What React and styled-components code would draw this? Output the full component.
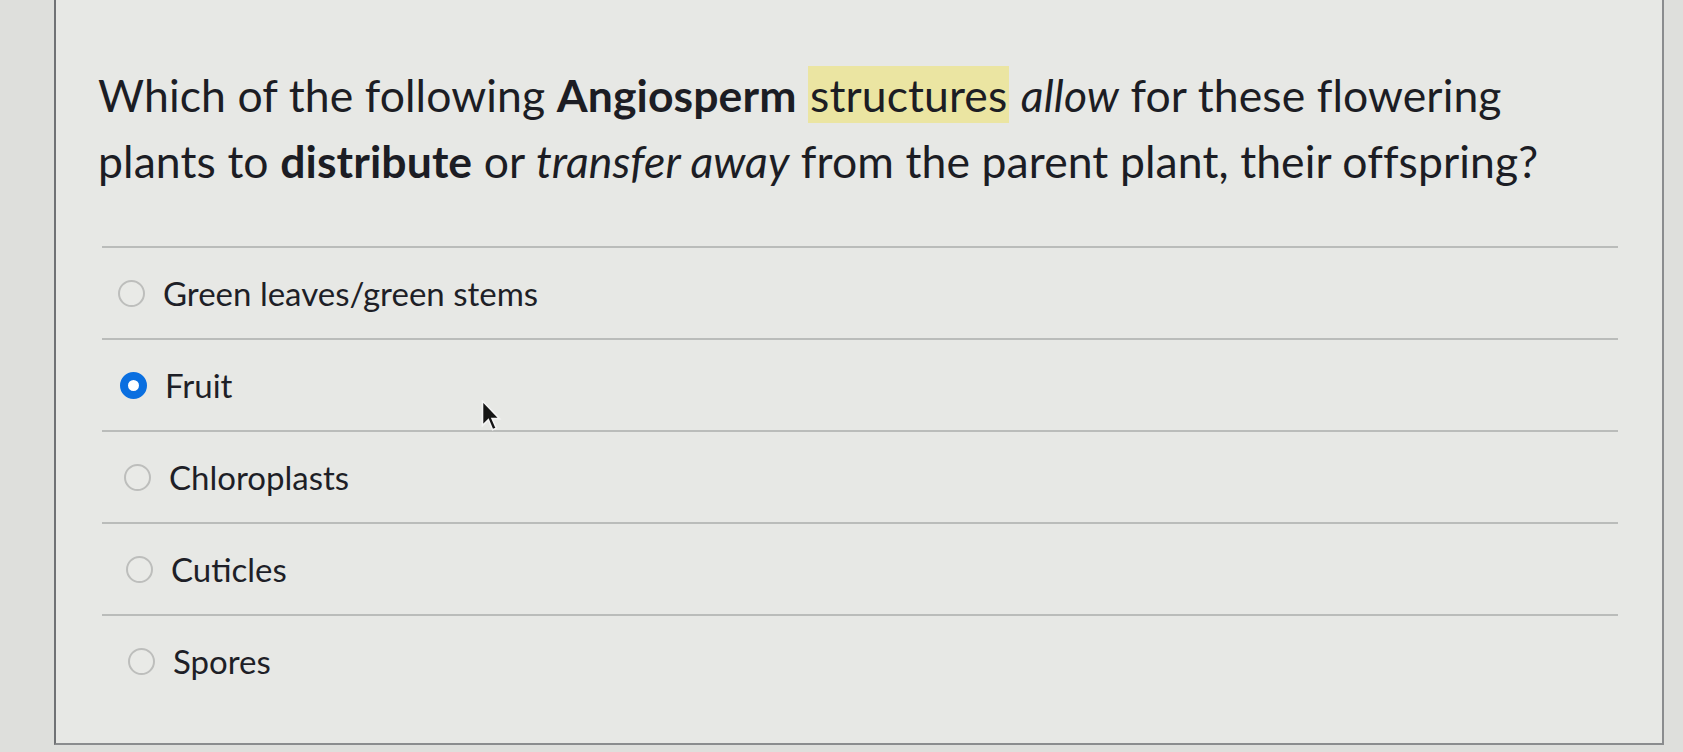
import React from 'react';
import styled, { createGlobalStyle } from 'styled-components';

const GlobalStyle = createGlobalStyle`
  html, body {
    margin: 0;
    padding: 0;
    background: #dedfdc;
  }
  body {
    font-family: Lato, "Noto Sans", sans-serif;
    color: #1f2027;
  }
`;

const Page = styled.div`
  width: 1683px;
  height: 752px;
  overflow: hidden;
  position: relative;
`;

const Card = styled.div`
  margin-left: 54px;
  width: 1610px;
  height: 745px;
  box-sizing: border-box;
  background: #e7e8e5;
  border-left: 2px solid #707275;
  border-right: 2px solid #8a8c8e;
  border-bottom: 2px solid #8a8c8e;
  padding: 62px 44px 0 42px;
`;

const Question = styled.p`
  margin: 0;
  max-width: 1450px;
  font-size: 44.5px;
  line-height: 66px;
  letter-spacing: 0.1px;
  color: #1c1d24;
`;

const Mark = styled.span`
  background: #ebe5a2;
  padding: 2px 2px;
`;

const Answers = styled.div`
  margin-top: 52px;
  border-top: 2px solid #babcba;
  margin-left: 4px;
`;

const Row = styled.label`
  display: flex;
  align-items: center;
  gap: 18px;
  height: 90px;
  padding-left: ${(p) => p.$indent}px;
  border-bottom: ${(p) => (p.$last ? 'none' : '2px solid #babcba')};
  font-size: 33px;
  color: #1e1f27;
`;

const Radio = styled.span`
  width: 27px;
  height: 27px;
  border-radius: 50%;
  box-sizing: border-box;
  flex: none;
  border: ${(p) => (p.$checked ? '8px solid #0a6fe0' : '2px solid #bdbebc')};
  background: ${(p) => (p.$checked ? '#ffffff' : '#e9eae7')};
`;

const Cursor = styled.svg`
  position: absolute;
  left: 480px;
  top: 400px;
`;

const options = [
  { label: 'Green leaves/green stems', indent: 16 },
  { label: 'Fruit', indent: 18, checked: true },
  { label: 'Chloroplasts', indent: 22 },
  { label: 'Cuticles', indent: 24 },
  { label: 'Spores', indent: 26 },
];

export default function App() {
  return (
    <Page>
      <GlobalStyle />
      <Card>
        <Question>
          Which of the following <b>Angiosperm</b> <Mark>structures</Mark>{' '}
          <i>allow</i> for these flowering plants to <b>distribute</b> or{' '}
          <i>transfer away</i> from the parent plant, their offspring?
        </Question>
        <Answers>
          {options.map((o, i) => (
            <Row key={o.label} $indent={o.indent} $last={i === options.length - 1}>
              <Radio $checked={o.checked} />
              {o.label}
            </Row>
          ))}
        </Answers>
      </Card>
      <Cursor width="22" height="34" viewBox="0 0 20 32">
        <path d="M2 1 L2 24 L7.5 18.5 L11.5 28 L15 26.5 L11 17.5 L18 17.5 Z" fill="#151515" stroke="#f4f4f4" strokeWidth="1.5" />
      </Cursor>
    </Page>
  );
}
